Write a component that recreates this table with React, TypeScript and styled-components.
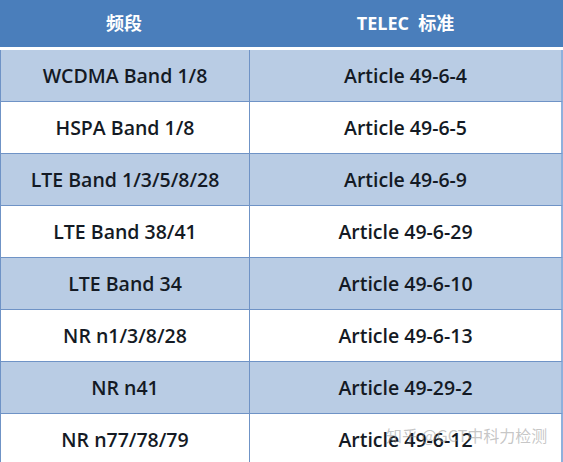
import React from "react";
import styled, { createGlobalStyle } from "styled-components";

const GlobalStyle = createGlobalStyle`
    html, body {
        margin:0;
        padding:0;
        background:#fff;
        overflow:hidden;
    }
    body{
        font-family:"Open Sans","Noto Sans CJK SC",sans-serif;
    }
`

const TableWrap = styled.div`
    position:relative;
    width:563px;
    height:462px;
    overflow:hidden;
`

const Header = styled.div`
    display:grid;
    grid-template-columns:248px 1fr;
    height:47px;
    background:#4a7ebb;
    border-bottom:3px solid #fff;
    div{
        display:flex;
        align-items:center;
        justify-content:center;
        color:#fff;
        font-size:18px;
        font-weight:700;
        padding-bottom:4px;
        font-family:"Open Sans","Noto Sans CJK SC",sans-serif;
    }
`

const Row = styled.div<{ $shaded: boolean }>`
    display:grid;
    grid-template-columns:248px 1fr;
    height:51px;
    background:${p => (p.$shaded ? "#b9cce4" : "#fff")};
    border-bottom:1px solid #6f93c6;
    border-left:1px solid #6f93c6;
    border-right:2px solid #8fb0dc;
`

const Cell = styled.div`
    display:flex;
    align-items:center;
    justify-content:center;
    font-size:19.5px;
    font-weight:600;
    color:#141a24;
    & + &{
        border-left:1px solid #6f93c6;
    }
`

const Watermark = styled.div`
    position:absolute;
    left:386px;
    top:423px;
    font-size:16px;
    color:rgba(150,150,150,0.55);
    font-family:"Noto Sans CJK SC",sans-serif;
    pointer-events:none;
`

const rows: [string, string][] = [
    ["WCDMA Band 1/8", "Article 49-6-4"],
    ["HSPA Band 1/8", "Article 49-6-5"],
    ["LTE Band 1/3/5/8/28", "Article 49-6-9"],
    ["LTE Band 38/41", "Article 49-6-29"],
    ["LTE Band 34", "Article 49-6-10"],
    ["NR n1/3/8/28", "Article 49-6-13"],
    ["NR n41", "Article 49-29-2"],
    ["NR n77/78/79", "Article 49-6-12"],
]

const App: React.FC = () => {
    return (
        <TableWrap>
            <GlobalStyle />
            <Header>
                <div>频段</div>
                <div>TELEC&nbsp;&nbsp;标准</div>
            </Header>
            {rows.map((r, i) => (
                <Row key={i} $shaded={i % 2 === 0}>
                    <Cell>{r[0]}</Cell>
                    <Cell>{r[1]}</Cell>
                </Row>
            ))}
            <Watermark>知乎 @GCT中科力检测</Watermark>
        </TableWrap>
    )
}

export default App
